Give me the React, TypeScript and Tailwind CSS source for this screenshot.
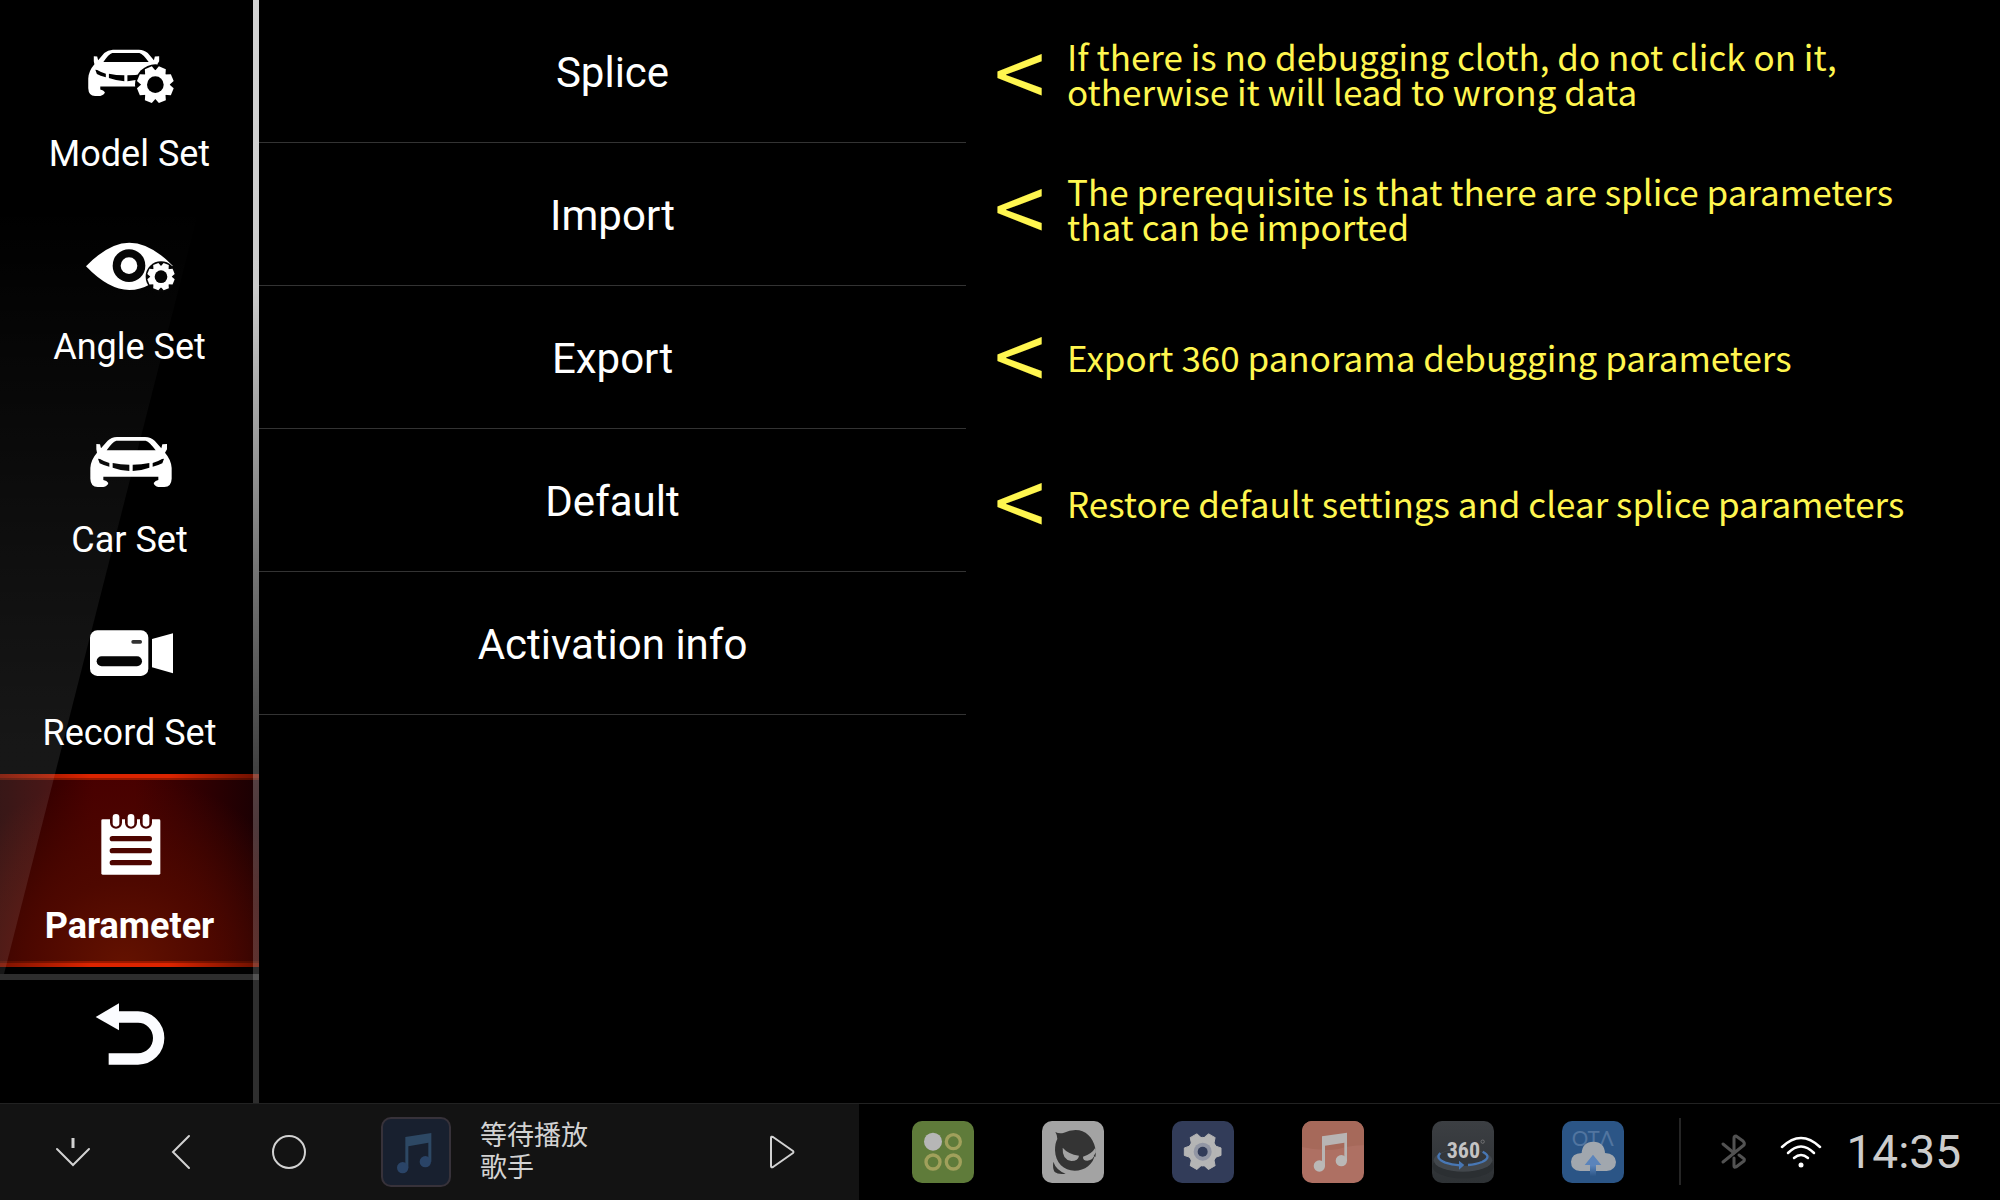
import type { ReactNode } from "react";

interface NavItem {
  label: string;
  icon: ReactNode;
  active?: boolean;
}

interface Note {
  lines: string[];
  className: string;
}

interface GearProps {
  cx: number;
  cy: number;
  r: number;
  teeth: number;
  offset?: number;
}

function Gear({ cx, cy, r, teeth, offset = 0 }: GearProps) {
  const w = r * 0.24;
  return (
    <g transform={`translate(${cx} ${cy})`}>
      <circle r={r * 0.78} />
      {Array.from({ length: teeth }, (_, i) => (
        <path
          key={i}
          d={`M${-w * 1.35} ${-r * 0.65} L${-w * 0.85} ${-r} H${w * 0.85} L${w * 1.35} ${-r * 0.65} Z`}
          strokeLinejoin="round"
          transform={`rotate(${offset + (360 / teeth) * i})`}
        />
      ))}
    </g>
  );
}

function CarShape() {
  return (
    <path
      fillRule="evenodd"
      d="M350 171 H434 Q452 172 463 182 L483 205 L486 193 L500 192 V208 L494 218 Q513 240 514 264 V296 Q513 321 492 321 H474 Q462 318 460 309 L466 303 L474 300 V290 H309 V300 L318 303 L324 309 Q322 318 309 321 H292 Q271 321 270 296 V264 Q271 240 290 218 L288 208 V192 L299 193 L302 205 L322 182 Q333 172 350 171 Z
      M348 182 Q336 186 319 211 H466 Q448 186 436 182 Z
      M293 236 L299 237 Q310 244 327 249 V260 Q308 256 298 250 Z
      M491 236 L485 237 Q474 244 457 249 V260 Q476 256 486 250 Z
      M337 249 Q360 254 387 254 V273 Q358 271 337 263 Z
      M447 249 Q424 254 397 254 V273 Q426 271 447 263 Z"
    />
  );
}

function ModelIcon() {
  return (
    <svg viewBox="254 120 270 210" className="h-[70px] w-[90px]" fill="#fff">
      <g transform="translate(14 -9) scale(0.925)">
        <CarShape />
      </g>
      <circle cx="465" cy="254" r="61" fill="#000" />
      <Gear cx={465} cy={254} r={55} teeth={8} offset={22.5} />
      <circle cx="465" cy="254" r="25" fill="#000" />
    </svg>
  );
}

function AngleIcon() {
  return (
    <svg viewBox="254 699 270 210" className="h-[70px] w-[90px]" fill="#fff">
      <path d="M257 799 Q325 728 387 728 Q450 728 517 797 Q450 870 387 870 Q325 870 257 799 Z" />
      <circle cx="386" cy="797" r="49" fill="#030303" />
      <circle cx="386" cy="797" r="25" />
      <circle cx="482" cy="830" r="46" fill="#030303" />
      <Gear cx={482} cy={830} r={41} teeth={8} offset={22.5} />
      <circle cx="482" cy="830" r="19" fill="#030303" />
    </svg>
  );
}

function CarIcon() {
  return (
    <svg viewBox="254 138 270 210" className="h-[70px] w-[90px]" fill="#fff">
      <CarShape />
    </svg>
  );
}

function RecordIcon() {
  return (
    <svg viewBox="254 717 270 210" className="h-[70px] w-[90px]" fill="#fff">
      <rect x="269" y="751" width="175" height="137" rx="22" />
      <rect x="289" y="829" width="136" height="30" rx="15" fill="#050505" />
      <rect x="393" y="780" width="32" height="11" rx="5" fill="#333" />
      <path d="M455 777 L518 760 V880 L455 862 Z" />
    </svg>
  );
}

function ParameterIcon() {
  return (
    <svg viewBox="254 186 270 210" className="h-[70px] w-[90px]" fill="#fff">
      <rect x="303" y="208" width="177" height="166" rx="4" />
      {[347, 392, 437].map((x) => (
        <g key={x}>
          <rect x={x - 18} y="186" width="36" height="50" rx="18" fill="#4a0300" />
          <rect x={x - 10} y="192" width="20" height="38" rx="10" />
        </g>
      ))}
      {[258, 294, 330].map((y) => (
        <rect key={y} x="328" y={y} width="127" height="16" rx="8" fill="#4d0500" />
      ))}
    </svg>
  );
}

const navItems: NavItem[] = [
  { label: "Model Set", icon: <ModelIcon /> },
  { label: "Angle Set", icon: <AngleIcon /> },
  { label: "Car Set", icon: <CarIcon /> },
  { label: "Record Set", icon: <RecordIcon /> },
  { label: "Parameter", icon: <ParameterIcon />, active: true },
];

const menu = ["Splice", "Import", "Export", "Default", "Activation info"];

const notes: Note[] = [
  {
    lines: ["If there is no debugging cloth, do not click on it,", "otherwise it will lead to wrong data"],
    className: "h-[135px]",
  },
  {
    lines: ["The prerequisite is that there are splice parameters", "that can be imported"],
    className: "h-[135px]",
  },
  { lines: ["Export 360 panorama debugging parameters"], className: "mt-2 h-[146px]" },
  { lines: ["Restore default settings and clear splice parameters"], className: "h-[146px]" },
];

function Sidebar() {
  return (
    <aside className="relative flex w-[259px] shrink-0 flex-col bg-black pt-0.5">
      <nav className="flex flex-col">
        {navItems.map((item) => (
          <button
            key={item.label}
            type="button"
            className={
              item.active
                ? "flex h-[193px] flex-col bg-[radial-gradient(ellipse_75%_100%_at_48%_100%,#641200_0%,#4e0800_45%,transparent_100%),linear-gradient(90deg,#240000,#480000_36%,#480000_52%,#1a0003)] font-bold"
                : "flex h-[193px] flex-col"
            }
          >
            <span
              className={
                item.active
                  ? "block h-1.5 w-full border-b-2 border-black/30 bg-[linear-gradient(90deg,#7a1200,#dc2400_35%,#dc2400_65%,#6a1000)]"
                  : "block h-1.5 w-full"
              }
            />
            <span className="flex w-full flex-1 flex-col items-center gap-[22px] pt-8 text-[36px] leading-[44px]">
              {item.icon}
              {item.label}
            </span>
            <span
              className={
                item.active
                  ? "block h-1.5 w-full border-t-2 border-black/30 bg-[linear-gradient(90deg,#7a1200,#dc2400_35%,#dc2400_65%,#6a1000)]"
                  : "block h-1.5 w-full"
              }
            />
          </button>
        ))}
      </nav>
      <div className="mt-[7px] h-1.5 bg-[#2d2d2d]" />
      <button type="button" aria-label="Back" className="flex flex-1 items-center justify-center pb-4">
        <svg viewBox="280 760 216 190" className="h-16 w-[72px]" fill="#fbfcff">
          <path d="M285 804 L355 763 V844 Z" />
          <path d="M350 804 H412 A62 63 0 0 1 412 930 H324" fill="none" stroke="#fbfcff" strokeWidth="34" />
        </svg>
      </button>

      {/* Diagonal sheen and the light strip on the right edge */}
      <div className="pointer-events-none absolute top-[205px] left-0 h-[769px] w-[200px] bg-linear-to-b from-white/0 to-white/9 to-70% [clip-path:polygon(0_0,100%_0,2%_100%,0_100%)]" />
      <div className="pointer-events-none absolute inset-y-0 right-0 w-1.5 bg-[linear-gradient(180deg,rgba(255,255,255,.83)_0%,rgba(255,255,255,.8)_26%,rgba(255,255,255,.67)_35%,rgba(255,255,255,.45)_52%,rgba(255,255,255,.25)_70%,rgba(255,255,255,.18)_82%)]" />
    </aside>
  );
}

function AppIcon({ name, className, children }: { name: string; className: string; children: ReactNode }) {
  return (
    <button type="button" aria-label={name} className={`size-[62px] overflow-hidden rounded-[10px] ${className}`}>
      <svg viewBox="0 0 186 186" className="size-full">
        {children}
      </svg>
    </button>
  );
}

function AppDock() {
  return (
    <div className="flex items-center gap-[68px]">
      <AppIcon name="Apps" className="bg-[#5f7b3a]">
        <circle cx="63" cy="62" r="27" fill="#b6b6b6" />
        <g fill="none" stroke="#a0a05b" strokeWidth="10">
          <circle cx="124" cy="62" r="21" />
          <circle cx="63" cy="123" r="21" />
          <circle cx="124" cy="123" r="21" />
        </g>
      </AppIcon>
      <AppIcon name="Assistant" className="bg-[#a3a3a3]">
        <path
          d="M40 33 Q52 39 66 35 Q82 27 101 27 C130 27 153 48 160 82 L159 98 C155 130 128 149 98 149 C66 149 40 126 39 88 Q39 66 46 54 Q46 42 40 33 Z"
          fill="#343434"
        />
        <path d="M62 80 Q78 99 111 104 Q109 120 88 120 Q60 116 62 80 Z" fill="#a3a3a3" />
        <path d="M123 107 Q150 98 160 80 L161 96 Q154 118 136 119 Q122 119 123 107 Z" fill="#a3a3a3" />
        <path d="M155 105 L162 94 L160 108 Z" fill="#343434" />
        <path d="M34 122 Q42 147 71 158 Q48 161 38 153 Q31 142 34 122 Z" fill="#343434" />
      </AppIcon>
      <AppIcon name="Settings" className="bg-[#323c59]">
        <g fill="#b5b5b5" stroke="#b5b5b5" strokeWidth="3">
          <Gear cx={92} cy={92} r={55} teeth={6} offset={30} />
        </g>
        <circle cx="92" cy="92" r="27" fill="#9296a4" />
        <circle cx="92" cy="92" r="15" fill="#323c59" />
      </AppIcon>
      <AppIcon name="Music" className="bg-[#ae7063]">
        <path d="M0 0 H186 V73 Q150 72 110 84 Q60 92 0 78 Z" fill="#a6695a" />
        <path d="M60 46 L135 35 V120 H127 V65 L69 74 V136 H60 Z" fill="#b8b4b3" />
        <circle cx="52" cy="135" r="17" fill="#bab8b7" />
        <circle cx="118" cy="119" r="17" fill="#bab8b7" />
      </AppIcon>
      <AppIcon name="360 view" className="bg-linear-to-b from-[#3c3f43] to-[#2e3235]">
        <ellipse cx="93" cy="136" rx="92" ry="36" fill="#2b2f32" />
        <ellipse cx="93" cy="118" rx="88" ry="34" fill="#42474c" />
        <ellipse cx="93" cy="110" rx="74" ry="25" fill="#33373b" />
        <g fill="none" stroke="#4877b4" strokeWidth="7">
          <path d="M25 96 Q8 112 40 125 Q58 131 84 133" />
          <path d="M152 92 Q182 108 150 123 Q134 130 108 132" />
        </g>
        <path d="M81 119 L97 132 L81 146 Z" fill="#4877b4" />
        <text
          x="94"
          y="110"
          textAnchor="middle"
          fontSize="66"
          fontWeight="700"
          fill="#c4c4c4"
          fontFamily="'Roboto Condensed','Liberation Sans Narrow',Roboto,sans-serif"
        >
          360
        </text>
        <circle cx="152" cy="62" r="5" fill="none" stroke="#888" strokeWidth="2" />
      </AppIcon>
      <AppIcon name="OTA" className="bg-[#2b5586]">
        <text x="92" y="74" textAnchor="middle" fontSize="62" fill="#5275a0" fontFamily="Lato,sans-serif">
          OTΛ
        </text>
        <path
          d="M54 150 Q27 148 27 122 Q29 97 59 96 Q61 63 94 62 Q127 63 129 96 Q160 97 162 123 Q161 148 134 150 Z"
          fill="#a1a7ae"
        />
        <path d="M93 101 L118 132 H102 V166 H84 V132 H68 Z" fill="url(#otaArrow)" />
        <defs>
          <linearGradient id="otaArrow" x1="0" y1="0" x2="0" y2="1">
            <stop offset="0.5" stopColor="#5b84bb" />
            <stop offset="1" stopColor="#2b5586" />
          </linearGradient>
        </defs>
      </AppIcon>
    </div>
  );
}

function BottomBar() {
  return (
    <footer className="flex h-[97px] shrink-0 border-t border-[#222] bg-black">
      <div className="flex w-[859px] shrink-0 items-center bg-[#131313] pr-[59px] pb-px pl-[55px] text-[#d2d2d2]">
        <div className="flex gap-[72px]">
          <button type="button" aria-label="Hide bar" className="size-9">
            <svg viewBox="0 0 36 36" fill="none" stroke="currentColor" strokeWidth="2" strokeLinecap="round">
              <path d="M2 15 L18 31 L34 15" />
              <path d="M18 4 V14" strokeWidth="3" strokeLinecap="butt" />
            </svg>
          </button>
          <button type="button" aria-label="Back" className="size-9">
            <svg viewBox="0 0 36 36" fill="none" stroke="currentColor" strokeWidth="2" strokeLinecap="round">
              <path d="M26 2 L10 18 L26 34" />
            </svg>
          </button>
          <button type="button" aria-label="Home" className="size-9">
            <svg viewBox="0 0 36 36" fill="none" stroke="currentColor" strokeWidth="2">
              <circle cx="18" cy="18" r="16" />
            </svg>
          </button>
        </div>
        <div className="ml-[74px] size-[70px] rounded-[10px] border-2 border-[#37323a] bg-[#18202f]">
          <svg viewBox="6 6 198 198" className="size-full" fill="#2d4864">
            <path d="M73 60 L151 48 V134 H142 V77 L82 88 V152 H73 Z" />
            <circle cx="65" cy="152" r="17" fill="#2a4467" />
            <circle cx="133" cy="134" r="17" fill="#2a4467" />
          </svg>
        </div>
        <div className="ml-[29px] pb-1 font-['Noto_Sans_CJK_SC',sans-serif] text-[27px] leading-8">
          <p>等待播放</p>
          <p>歌手</p>
        </div>
        <button type="button" aria-label="Play" className="ml-auto size-9">
          <svg viewBox="0 0 36 36" fill="none" stroke="currentColor" strokeWidth="2" strokeLinejoin="round">
            <path d="M7 4 Q7 2 9 3 L29 17 Q30 18 29 19 L9 33 Q7 34 7 32 Z" />
          </svg>
        </button>
      </div>

      <div className="flex flex-1 items-center justify-between pr-[39px] pb-px pl-[53px]">
        <AppDock />
        <div className="flex items-center">
          <span className="h-[67px] w-0.5 bg-[#252525]" />
          <svg
            viewBox="0 0 36 36"
            className="ml-[35px] size-9"
            fill="none"
            stroke="#525252"
            strokeWidth="3"
            strokeLinecap="round"
            strokeLinejoin="round"
          >
            <path d="M7 28 L28 11 Q29 9 27 7 L20 2 Q18 2 18 4 V17" />
            <path d="M7 10 L18 19" />
            <path d="M18 24 V32 Q18 34 20 33 L28 27 Q29 25 27 24 L23 21" />
          </svg>
          <svg
            viewBox="0 0 42 36"
            className="ml-7 h-9 w-[42px]"
            fill="none"
            stroke="#fff"
            strokeWidth="2.5"
            strokeLinecap="round"
          >
            <path d="M2 13 Q21 -5 40 13" />
            <path d="M8 19 Q21 6 34 19" />
            <path d="M14 24 Q21 18 28 24" />
            <circle cx="21" cy="31" r="2.5" fill="#fff" stroke="none" />
          </svg>
          <time className="ml-6 text-[46px] leading-[52px] text-[#ccc]">14:35</time>
        </div>
      </div>
    </footer>
  );
}

export default function App() {
  return (
    <div className="flex min-h-screen flex-col bg-black font-[Roboto,sans-serif] text-white">
      <main className="flex flex-1">
        <Sidebar />
        <ul className="w-[707px] shrink-0">
          {menu.map((label) => (
            <li key={label} className="border-b border-[#333]">
              <button type="button" className="h-[142px] w-full pt-1 text-[42px] leading-[50px]">
                {label}
              </button>
            </li>
          ))}
        </ul>
        <section className="flex-1 pt-[5px] pl-7 font-['Noto_Sans_CJK_SC',sans-serif] text-[#fff64f]">
          {notes.map((note) => (
            <div key={note.lines[0]} className={`flex items-center gap-5 ${note.className}`}>
              <span className="w-[53px] pb-2 text-[92px] leading-[84px]">&lt;</span>
              <p className="text-[35px] leading-[35px] whitespace-nowrap">
                {note.lines.map((line) => (
                  <span key={line} className="block">
                    {line}
                  </span>
                ))}
              </p>
            </div>
          ))}
        </section>
      </main>
      <BottomBar />
    </div>
  );
}
